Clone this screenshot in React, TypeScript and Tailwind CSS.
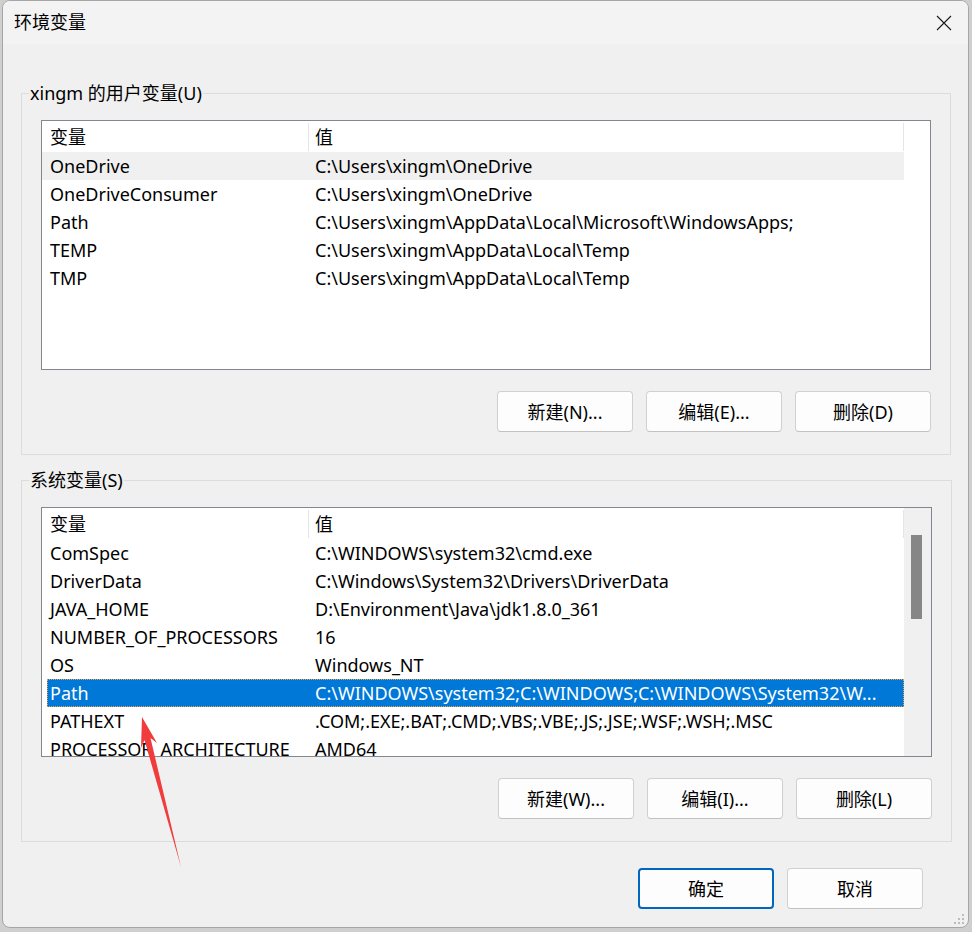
/**
 * 环境变量ダイアログ
 * Windows の「環境変数」ダイアログの再現
 */

import React from 'react';

type EnvVar = { name: string; value: string };

const userVars: EnvVar[] = [
  { name: 'OneDrive', value: 'C:\\Users\\xingm\\OneDrive' },
  { name: 'OneDriveConsumer', value: 'C:\\Users\\xingm\\OneDrive' },
  { name: 'Path', value: 'C:\\Users\\xingm\\AppData\\Local\\Microsoft\\WindowsApps;' },
  { name: 'TEMP', value: 'C:\\Users\\xingm\\AppData\\Local\\Temp' },
  { name: 'TMP', value: 'C:\\Users\\xingm\\AppData\\Local\\Temp' },
];

const systemVars: EnvVar[] = [
  { name: 'ComSpec', value: 'C:\\WINDOWS\\system32\\cmd.exe' },
  { name: 'DriverData', value: 'C:\\Windows\\System32\\Drivers\\DriverData' },
  { name: 'JAVA_HOME', value: 'D:\\Environment\\Java\\jdk1.8.0_361' },
  { name: 'NUMBER_OF_PROCESSORS', value: '16' },
  { name: 'OS', value: 'Windows_NT' },
  { name: 'Path', value: 'C:\\WINDOWS\\system32;C:\\WINDOWS;C:\\WINDOWS\\System32\\W...' },
  { name: 'PATHEXT', value: '.COM;.EXE;.BAT;.CMD;.VBS;.VBE;.JS;.JSE;.WSF;.WSH;.MSC' },
  { name: 'PROCESSOR_ARCHITECTURE', value: 'AMD64' },
];

const font = 'font-["Noto_Sans","Noto_Sans_CJK_SC",sans-serif] text-[18px]';

// 普通のボタン
const WinButton: React.FC<{ label: string; primary?: boolean }> = ({ label, primary }) => (
  <button
    className={`w-[136px] h-[41px] rounded-[4px] bg-[#fdfdfd] text-black leading-none ${
      primary ? 'border-2 border-[#0067c0]' : 'border border-[#d0d0d0] border-b-[#c2c2c2]'
    }`}
  >
    {label}
  </button>
);

// リストビュー
const VarList: React.FC<{
  vars: EnvVar[];
  hoverIndex?: number;
  selectedIndex?: number;
  scrollbar?: boolean;
}> = ({ vars, hoverIndex, selectedIndex, scrollbar }) => (
  <div className="h-[250px] border border-[#828790] bg-white flex overflow-hidden">
    <div className="flex-1 flex flex-col overflow-hidden">
      {/* ヘッダー */}
      <div className="h-[31px] flex shrink-0 items-center">
        <div className="w-[267px] h-[28px] mt-[1px] flex items-center pl-[8px] border-r border-[#e5e5e5]">变量</div>
        <div className="w-[595px] h-[28px] mt-[1px] flex items-center pl-[6px] border-r border-[#e5e5e5]">值</div>
      </div>
      {/* 行 */}
      {vars.map((v, i) => {
        const selected = i === selectedIndex;
        const hover = i === hoverIndex;
        if (selected) {
          return (
            <div
              key={v.name}
              className="h-[28px] shrink-0 flex items-center ml-[5px] w-[857px] bg-[#0078d7] text-white border border-dotted border-[#f0a040] whitespace-nowrap"
            >
              <div className="w-[261px] pl-[2px]">{v.name}</div>
              <div className="flex-1 pl-[6px] overflow-hidden">{v.value}</div>
            </div>
          );
        }
        return (
          <div
            key={v.name}
            className={`h-[28px] shrink-0 flex items-center w-[862px] whitespace-nowrap ${hover ? 'bg-[#f0f0f0]' : ''}`}
          >
            <div className="w-[267px] pl-[8px]">{v.name}</div>
            <div className="flex-1 pl-[6px] overflow-hidden">{v.value}</div>
          </div>
        );
      })}
    </div>
    {scrollbar && (
      <div className="w-[27px] shrink-0 bg-[#f0f0f0] pt-[27px] pl-[7px]">
        <div className="w-[11px] h-[84px] bg-[#868686]" />
      </div>
    )}
  </div>
);

// グループボックス
const GroupBox: React.FC<{ title: string; children: React.ReactNode; className?: string }> = ({
  title,
  children,
  className = '',
}) => (
  <fieldset className={`w-[930px] ml-[18px] border border-[#dcdcdc] ${className}`}>
    <legend className="ml-[7px] px-[1px] leading-[26px]">{title}</legend>
    <div className="px-[19px] pt-[14px] pb-[22px]">{children}</div>
  </fieldset>
);

export default function App() {
  return (
    <div className={`relative w-[972px] h-[932px] bg-[#cfcfcf] overflow-hidden text-black ${font}`}>
      {/* ウィンドウ */}
      <div className="ml-[2px] w-[967px] h-[928px] rounded-[8px] border border-[#a6a6a6] bg-[#f0f0f0] overflow-hidden flex flex-col">
        {/* タイトルバー */}
        <div className="h-[43px] shrink-0 bg-[#f3f3f3] flex items-center justify-between pl-[11px]">
          <span>环境变量</span>
          <div className="w-[46px] h-[43px] flex items-center justify-center mr-[1px]">
            <svg width="16" height="16" viewBox="0 0 16 16">
              <path d="M1 1 L15 15 M15 1 L1 15" stroke="#1a1a1a" strokeWidth="1.1" />
            </svg>
          </div>
        </div>

        {/* 本体 */}
        <div className="flex-1 flex flex-col">
          <GroupBox title="xingm 的用户变量(U)" className="mt-[36px]">
            <VarList vars={userVars} hoverIndex={0} />
            <div className="mt-[21px] flex justify-end gap-[13px]">
              <WinButton label="新建(N)..." />
              <WinButton label="编辑(E)..." />
              <WinButton label="删除(D)" />
            </div>
          </GroupBox>

          <GroupBox title="系统变量(S)" className="mt-[12px]">
            <VarList vars={systemVars} selectedIndex={5} scrollbar />
            <div className="mt-[21px] flex justify-end gap-[13px]">
              <WinButton label="新建(W)..." />
              <WinButton label="编辑(I)..." />
              <WinButton label="删除(L)" />
            </div>
          </GroupBox>

          {/* フッター */}
          <div className="w-[930px] ml-[18px] mt-[26px] pr-[28px] flex justify-end gap-[13px]">
            <WinButton label="确定" primary />
            <WinButton label="取消" />
          </div>

          {/* サイズグリップ */}
          <div className="mt-auto self-end mr-[3px] mb-[2px]">
            <svg width="11" height="11" viewBox="0 0 11 11">
              <g fill="#bcbcbc">
                <rect x="8" y="0" width="2" height="2" />
                <rect x="4" y="4" width="2" height="2" />
                <rect x="8" y="4" width="2" height="2" />
                <rect x="0" y="8" width="2" height="2" />
                <rect x="4" y="8" width="2" height="2" />
                <rect x="8" y="8" width="2" height="2" />
              </g>
            </svg>
          </div>
        </div>
      </div>

      {/* 注釈の赤い矢印 */}
      <svg className="absolute left-0 top-0 pointer-events-none" width="972" height="932">
        <polygon
          points="142,717 157,743 150.5,738 181,867 144.5,740 141,748"
          fill="#f03c3c"
        />
      </svg>
    </div>
  );
}
